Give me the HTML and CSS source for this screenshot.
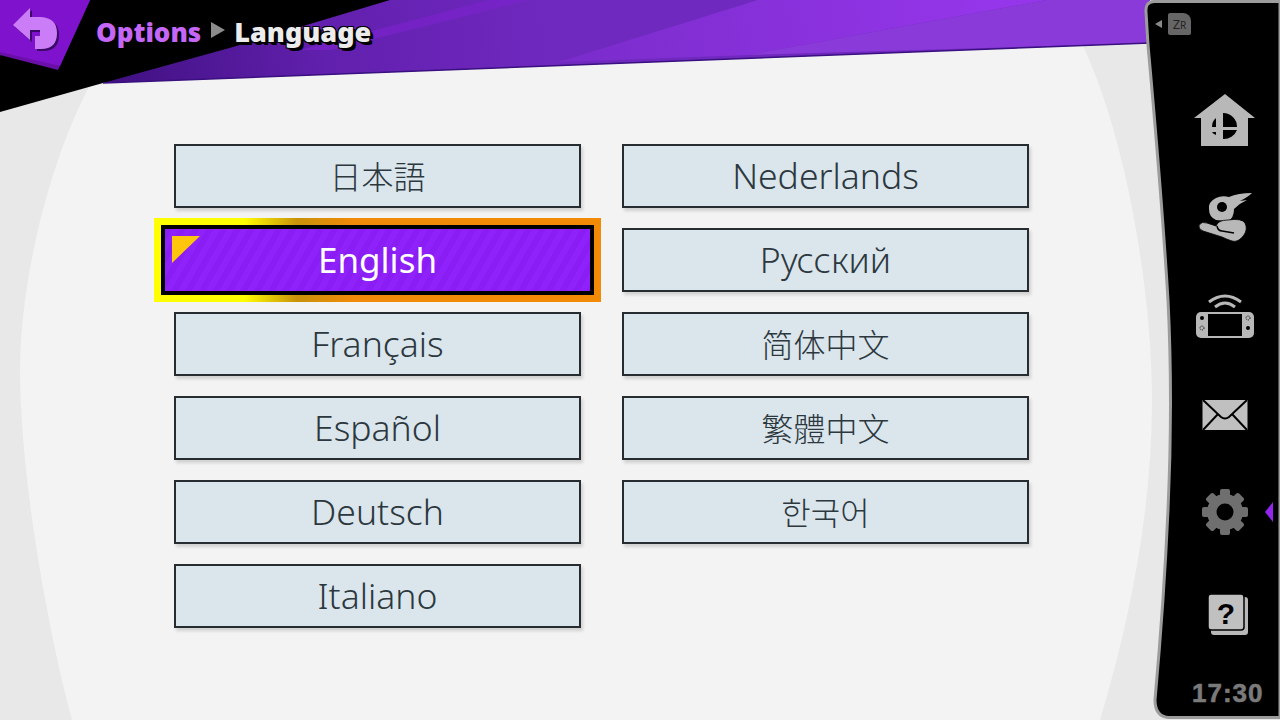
FILE: index.html
```html
<!DOCTYPE html>
<html lang="en">
<head>
  <meta charset="UTF-8">
  <title>Options - Language</title>
  <link rel="stylesheet" href="styles.css">
</head>
<body>
  <div class="screen">
    <!-- backdrop and header wedge -->
    <svg class="backdrop" width="1280" height="720" viewBox="0 0 1280 720">
      <defs>
        <linearGradient id="wedge" x1="100" y1="80" x2="560" y2="40" gradientUnits="userSpaceOnUse">
          <stop offset="0" stop-color="#3f1080"/>
          <stop offset="0.5" stop-color="#6220ae"/>
          <stop offset="1" stop-color="#7029bf"/>
        </linearGradient>
        <linearGradient id="band" x1="560" y1="60" x2="1000" y2="10" gradientUnits="userSpaceOnUse">
          <stop offset="0" stop-color="#7a2ccb"/>
          <stop offset="1" stop-color="#9536ea"/>
        </linearGradient>
      </defs>
      <rect width="1280" height="720" fill="#e8e8e8"/>
      <path d="M90 85 C45 170 20 290 20 370 C20 480 50 640 72 720 H1100 C1130 620 1152 510 1152 400 C1152 290 1125 130 1080 40 Z" fill="#f3f3f3"/>
      <path d="M0 0 H1150 V43 L103 83 L0 112 Z" fill="#000"/>
      <path d="M103 83 L233 47 L390 0 H1150 V43 Z" fill="url(#wedge)"/>
      <path d="M300 50 L489 0 H530 L330 50 Z" fill="#7a22cc" opacity="0.7"/>
      <path d="M559 62 L758 0 H1047 L748 55 Z" fill="url(#band)"/>
      <path d="M748 55 L1047 0 H1150 V43 Z" fill="#8a3ad8"/>
      <path d="M103 83 L1150 43" stroke="#3a1080" stroke-width="1.5"/>
      <path d="M0 0 H90 L58 70 L0 55 Z" fill="#6a0fa8"/>
      <path d="M0 0 H90 L60 66 L0 52 Z" fill="#7f12cc"/>
    </svg>

    <header class="topbar">
      <svg class="back-icon" width="46" height="44" viewBox="0 0 46 44">
        <path d="M0 17 L17 0 V9 H28 Q44 10 44 25 Q44 41 28 41 H22 V28 H27 V22 H17 V32 Z" fill="#3c0a66" transform="translate(2 2)"/>
        <path d="M0 17 L17 0 V9 H28 Q44 10 44 25 Q44 41 28 41 H22 V28 H27 V22 H17 V32 Z" fill="#cb7cf7"/>
      </svg>
      <nav class="crumbs">
        <span class="crumb-parent">Options</span>
        <span class="crumb-arrow"></span>
        <span class="crumb-current">Language</span>
      </nav>
    </header>

    <main class="lang-grid">
      <button class="lang-btn cjk-jp">日本語</button>
      <button class="lang-btn selected">English</button>
      <button class="lang-btn">Français</button>
      <button class="lang-btn">Español</button>
      <button class="lang-btn">Deutsch</button>
      <button class="lang-btn">Italiano</button>
      <button class="lang-btn">Nederlands</button>
      <button class="lang-btn">Русский</button>
      <button class="lang-btn cjk-sc">简体中文</button>
      <button class="lang-btn cjk-tc">繁體中文</button>
      <button class="lang-btn cjk-kr">한국어</button>
    </main>

    <aside class="sidebar">
      <svg class="sidebar-shape" width="140" height="720" viewBox="0 0 140 720">
        <path d="M140 1.5 H14 Q5 2 6 12 L8 45 Q22 200 28 300 Q33 400 28 510 Q24 600 15 700 Q15 716 28 717.5 H140 Z" fill="#000" stroke="#9c9c9c" stroke-width="3"/>
      </svg>

      <div class="zr-hint">
        <span class="zr-arrow"></span>
        <span class="zr-badge">Z<small>R</small></span>
      </div>

      <nav class="side-icons">
        <div class="side-item">
          <svg width="62" height="52" viewBox="0 0 62 52">
            <path d="M31 0 L61 24 H54 V52 H7 V24 H0 Z" fill="#b8b8b8"/>
            <path d="M29 19 A14 14 0 0 1 43 33 H29 Z M29 36 H43 A14 14 0 0 1 29 45 Z M22 33 V24 Q18 27 18 33 Z M18 38 H22 V41 Q19 40 18 38 Z" fill="#000"/>
          </svg>
        </div>
        <div class="side-item">
          <svg width="54" height="50" viewBox="0 0 54 50">
            <path d="M54 0 Q40 0 31 4 Q24 2 18 5 Q10 9 11 16 Q11 24 18 27 L30 28 Q36 25 36 16 Q42 10 49 7 L42 8 Q50 4 54 0 Z" fill="#b8b8b8"/>
            <circle cx="24" cy="14" r="5" fill="#000"/>
            <path d="M1 32 Q4 28 9 30 L18 33 Q20 27 30 27 Q44 25 47 30 Q50 36 46 42 Q40 50 34 48 Q28 46 24 44 L5 38 Q0 36 1 32 Z" fill="#b8b8b8" stroke="#000" stroke-width="0.8"/>
            <path d="M19 33 Q20 38 24 38 L36 40" fill="none" stroke="#000" stroke-width="1.5"/>
          </svg>
        </div>
        <div class="side-item">
          <svg width="60" height="46" viewBox="0 0 60 46">
            <path d="M14 9 Q30 -3 46 9" fill="none" stroke="#b8b8b8" stroke-width="3"/>
            <path d="M20 14 Q30 6 40 14" fill="none" stroke="#b8b8b8" stroke-width="3"/>
            <rect x="1" y="19" width="58" height="26" rx="5" fill="#b8b8b8"/>
            <rect x="13" y="21" width="34" height="22" fill="#000"/>
            <circle cx="7" cy="25" r="2" fill="#000"/>
            <circle cx="53" cy="35" r="2" fill="#000"/>
            <circle cx="7" cy="35" r="2" fill="none" stroke="#000" stroke-dasharray="1 1"/>
            <circle cx="53" cy="25" r="2" fill="none" stroke="#000" stroke-dasharray="1 1"/>
          </svg>
        </div>
        <div class="side-item">
          <svg class="mail-icon" width="46" height="32" viewBox="0 0 46 32">
            <rect x="0.5" y="1" width="45" height="30" fill="#c0c0c0"/>
            <path d="M1 1 L19 18 Q23 21 27 18 L45 1 M1 31 L16 15 M45 31 L30 15" fill="none" stroke="#000" stroke-width="2"/>
          </svg>
        </div>
        <div class="side-item">
          <svg width="46" height="46" viewBox="0 0 46 46">
            <g fill="#6f6f6f">
              <rect x="18" y="0" width="10" height="46" rx="2"/>
              <rect x="18" y="0" width="10" height="46" rx="2" transform="rotate(45 23 23)"/>
              <rect x="18" y="0" width="10" height="46" rx="2" transform="rotate(90 23 23)"/>
              <rect x="18" y="0" width="10" height="46" rx="2" transform="rotate(135 23 23)"/>
              <circle cx="23" cy="23" r="18"/>
            </g>
            <circle cx="23" cy="23" r="8.5" fill="#000"/>
          </svg>
          <span class="side-marker"></span>
        </div>
        <div class="side-item">
          <svg class="help-icon" width="42" height="44" viewBox="0 0 42 44">
            <rect x="4" y="4" width="37" height="38" rx="3" fill="#b8b8b8"/>
            <rect x="1" y="1" width="36" height="36" rx="3" fill="#c0c0c0" stroke="#000" stroke-width="1.5"/>
            <text x="19" y="31" class="help-mark">?</text>
          </svg>
        </div>
      </nav>
      <div class="clock">17:30</div>
    </aside>
  </div>
</body>
</html>
```

FILE: styles.css
```css
/* Page */
body {
  margin: 0;
  background: #e8e8e8;
  font-family: "Noto Sans", "Noto Sans CJK JP", sans-serif;
}

.screen {
  position: relative;
  width: 1280px;
  height: 720px;
  overflow: hidden;
}

.backdrop {
  position: absolute;
  top: 0;
  left: 0;
}

/* Header */
.topbar {
  position: absolute;
  top: 0;
  left: 0;
  display: flex;
  align-items: center;
  padding: 8px 0 0 13px;
}

.back-icon {
  margin-right: 37px;
}

.crumbs {
  display: flex;
  align-items: center;
  padding-top: 3px;
  font-family: "Noto Sans", sans-serif;
  font-size: 26px;
  font-weight: 900;
}

.crumb-parent {
  color: #c466f6;
}

.crumb-arrow {
  width: 0;
  height: 0;
  margin: 0 9px 4px 10px;
  border-left: 14px solid #8c8c8c;
  border-top: 8px solid transparent;
  border-bottom: 8px solid transparent;
}

.crumb-current {
  color: #ececec;
  font-size: 27px;
  text-shadow: 2px 2px 0 #000, -1px -1px 0 #000, 1px -1px 0 #000, -1px 1px 0 #000, 3px 3px 0 #000;
}

/* Language buttons */
.lang-grid {
  position: relative;
  z-index: 0;
  display: grid;
  grid-template-columns: 407px 407px;
  grid-template-rows: repeat(6, 64px);
  grid-auto-flow: column;
  column-gap: 41px;
  row-gap: 20px;
  padding: 144px 0 0 174px;
}

.lang-btn {
  padding: 0 0 2px;
  border: 2px solid #262c30;
  background: #dae5ec;
  box-shadow: 2px 3px 3px rgba(0, 0, 0, 0.14);
  color: #2c383e;
  font-family: "Noto Sans", sans-serif;
  font-size: 35.5px;
  font-weight: 300;
}

.cjk-jp,
.cjk-sc,
.cjk-tc,
.cjk-kr {
  font-size: 32px;
}

.cjk-jp { font-family: "Noto Sans CJK JP", sans-serif; }
.cjk-sc { font-family: "Noto Sans CJK SC", sans-serif; }
.cjk-tc { font-family: "Noto Sans CJK TC", sans-serif; }
.cjk-kr { font-family: "Noto Sans CJK KR", sans-serif; }

.lang-btn.selected {
  position: relative;
  margin: -3px -13px;
  border: 4px solid #000;
  background: repeating-linear-gradient(120deg, #8a1cf4 0 6px, #8f22fb 6px 12px);
  color: #fff;
  font-size: 35px;
  font-weight: 400;
  box-shadow: none;
}

/* yellow to orange ring */
.lang-btn.selected::before {
  content: "";
  position: absolute;
  inset: -11px;
  z-index: -1;
  background: linear-gradient(90deg, #ffff00 0, #ffff00 20%, #c9920a 32%, #f08a08 44%, #f28a06 100%);
}

/* corner notch */
.lang-btn.selected::after {
  content: "";
  position: absolute;
  top: 7px;
  left: 7px;
  width: 28px;
  height: 27px;
  background: #ffc60c;
  clip-path: polygon(0 0, 100% 0, 0 100%);
}

/* Right sidebar */
.sidebar {
  position: absolute;
  top: 0;
  right: 0;
  width: 140px;
  height: 720px;
}

.sidebar-shape {
  position: absolute;
  top: 0;
  left: 0;
}

.zr-hint {
  position: absolute;
  top: 13px;
  left: 15px;
  display: flex;
  align-items: center;
  gap: 6px;
}

.zr-arrow {
  width: 0;
  height: 0;
  border-right: 7px solid #8a8a8a;
  border-top: 4px solid transparent;
  border-bottom: 4px solid transparent;
}

.zr-badge {
  width: 23px;
  height: 22px;
  border-radius: 2px 8px 2px 2px;
  background: #666;
  color: #222;
  font-size: 13px;
  line-height: 23px;
  text-align: center;
}

.zr-badge small {
  font-size: 10px;
}

.side-icons {
  position: absolute;
  top: 71px;
  left: 0;
  width: 170px;
  display: flex;
  flex-direction: column;
}

.side-item {
  position: relative;
  height: 98px;
  display: flex;
  align-items: center;
  justify-content: center;
}

.mail-icon {
  margin-top: 2px;
}

.help-icon {
  margin: 10px 0 0 6px;
}

.side-marker {
  position: absolute;
  top: 39px;
  right: 37px;
  width: 0;
  height: 0;
  border-right: 8px solid #9326ee;
  border-top: 10px solid transparent;
  border-bottom: 10px solid transparent;
}

.help-mark {
  font-family: "Liberation Sans", sans-serif;
  font-size: 30px;
  font-weight: 700;
  text-anchor: middle;
  fill: #000;
}

.clock {
  position: absolute;
  top: 678px;
  left: 52px;
  color: #7a7a7a;
  font-family: "Liberation Sans", sans-serif;
  font-size: 26px;
  font-weight: 700;
  letter-spacing: 1px;
  -webkit-text-stroke: 0.6px #7a7a7a;
}
```
